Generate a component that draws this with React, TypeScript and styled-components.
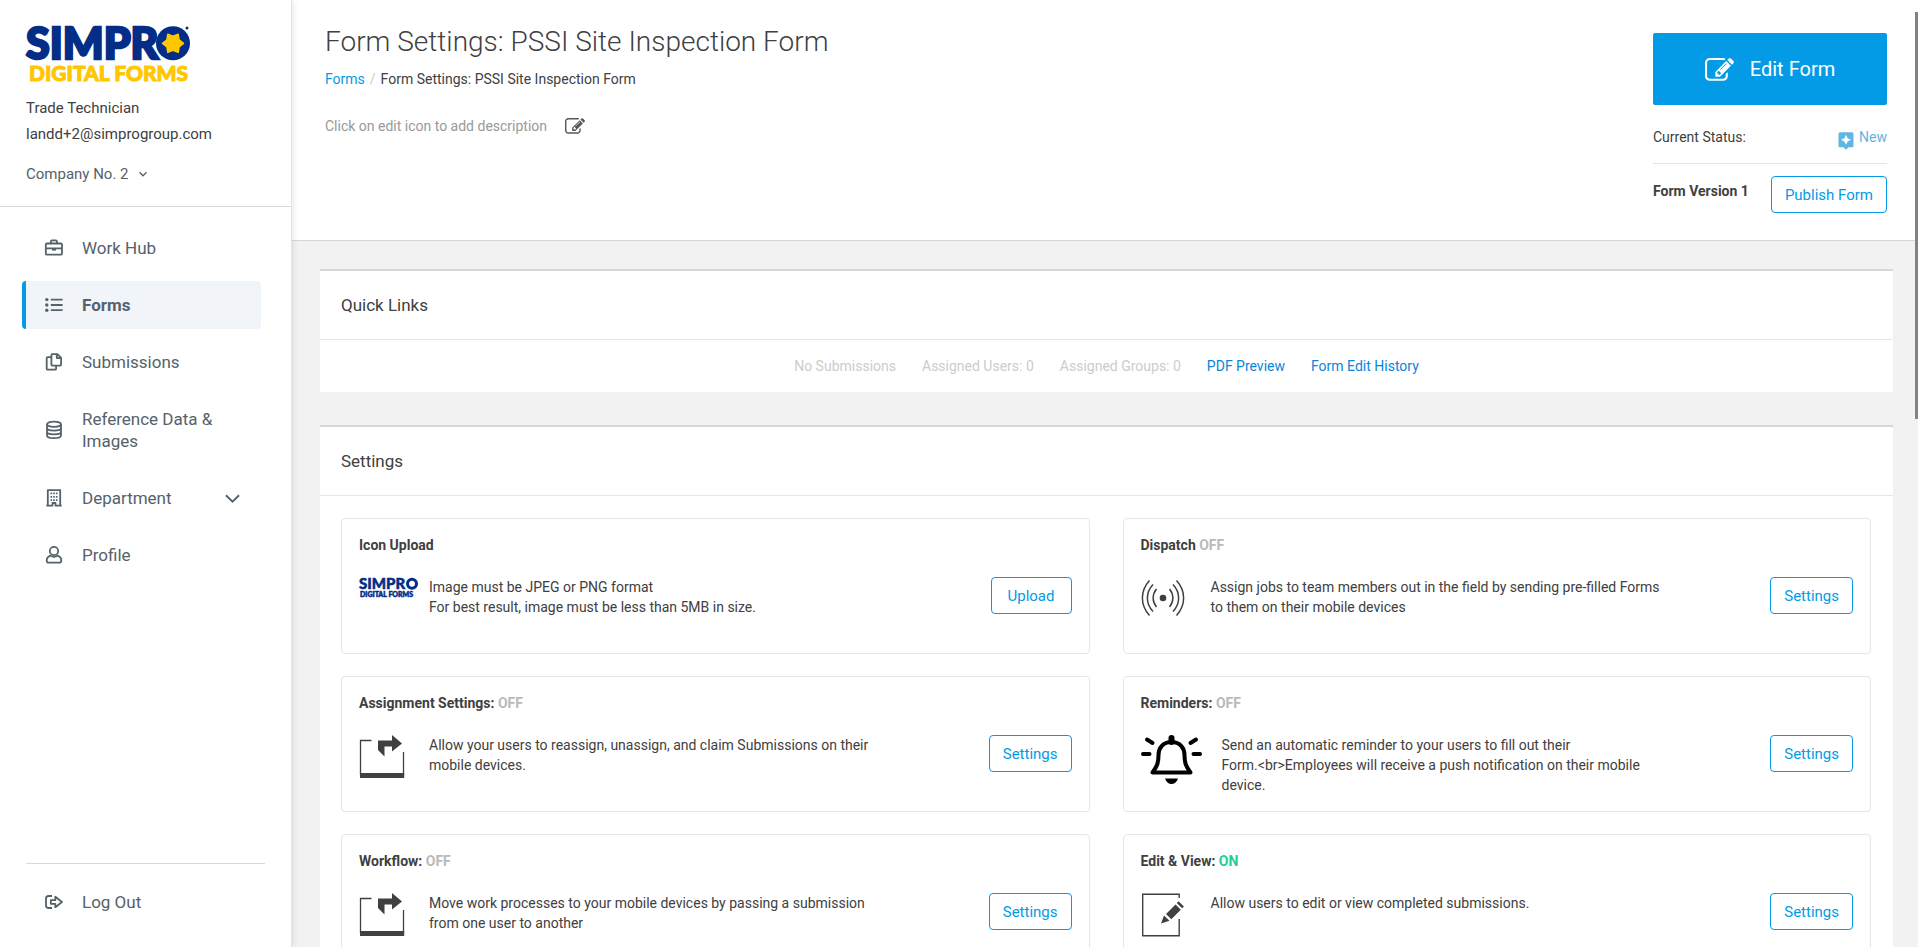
import React from "react";
import styled, { createGlobalStyle } from "styled-components";

const color = {
  text: "#404041",
  nav: "#55626a",
  accent: "#039be5",
  link: "#0a84dc",
  line: "#e4e7e9",
  edge: "#d2d9dd",
  muted: "#999999",
  off: "#b8babb",
  on: "#1fce95",
  navy: "#032d86",
  gold: "#ffc700",
};

const Global = createGlobalStyle`
  *, *::before, *::after { box-sizing: border-box; }
  body {
    margin: 0;
    font-family: Roboto, "Liberation Sans", sans-serif;
    font-size: 14px;
    line-height: 20px;
    color: ${color.text};
    background: #f2f2f2;
  }
  h1, h2, h3, p, ul { margin: 0; padding: 0; font-weight: 400; }
  ul { list-style: none; }
  a { text-decoration: none; color: inherit; }
  button { font-family: inherit; cursor: pointer; }
  svg { display: block; flex: none; overflow: visible; }
`;

const Shell = styled.div`
  display: flex;
  height: 100vh;
`;

const Sidebar = styled.aside`
  display: flex;
  flex-direction: column;
  flex: none;
  width: 292px;
  background: #fff;
  border-right: 1px solid #e3e3e3;
  box-shadow: 1px 0 6px rgba(0, 0, 0, 0.1);
  z-index: 1;
`;

const Account = styled.div`
  padding: 24px 26px 19px;
  border-bottom: 1px solid #d8d8d8;
  font-size: 15px;
  line-height: 26px;
`;

const AccountDetails = styled.div`
  padding-top: 11px;
`;

const CompanyButton = styled.button`
  display: flex;
  align-items: center;
  gap: 10px;
  margin-top: 14px;
  padding: 0;
  border: 0;
  background: none;
  font-size: 15px;
  line-height: 26px;
  color: ${color.nav};
`;

const Nav = styled.nav`
  flex: 1;
  padding: 17px 30px 0 22px;
`;

const NavList = styled.ul`
  display: flex;
  flex-direction: column;
  gap: 9px;
`;

const NavLink = styled.a<{ $active?: boolean }>`
  display: flex;
  align-items: center;
  gap: 18px;
  padding: 13px 21px 13px 18px;
  border-left: 4px solid ${(p) => (p.$active ? color.accent : "transparent")};
  border-radius: 4px;
  background: ${(p) => (p.$active ? "#f1f5fa" : "none")};
  font-size: 17px;
  font-weight: ${(p) => (p.$active ? 700 : 400)};
  line-height: 22px;
  color: ${color.nav};
`;

const NavLabel = styled.span`
  flex: 1;
`;

const SidebarFoot = styled.div`
  margin: 0 26px;
  padding: 14px 0 21px;
  border-top: 1px solid #d8d8d8;
  a { margin-left: -4px; }
`;

const Main = styled.main`
  flex: 1;
  min-width: 0;
  overflow-y: auto;
  scrollbar-width: none;
`;

const ScrollThumb = styled.div`
  position: fixed;
  top: 12px;
  right: 0;
  width: 3px;
  height: 43%;
  background: #808486;
  z-index: 2;
`;

const PageHeader = styled.header`
  display: flex;
  justify-content: space-between;
  padding: 24px 31px 27px 33px;
  background: #fff;
  border-bottom: 1px solid ${color.edge};
`;

const PageTitle = styled.h1`
  font-size: 28px;
  font-weight: 300;
  line-height: 36px;
`;

const Breadcrumb = styled.nav`
  display: flex;
  gap: 5px;
  margin-top: 9px;
  a { color: ${color.accent}; }
  i { color: #ccc; font-style: normal; }
`;

const Description = styled.div`
  display: flex;
  align-items: center;
  gap: 18px;
  margin-top: 27px;
  color: ${color.muted};
`;

const IconButton = styled.button`
  padding: 0;
  border: 0;
  background: none;
  color: #58585a;
`;

const Actions = styled.div`
  flex: none;
  width: 234px;
  padding-top: 9px;
`;

const EditButton = styled.button`
  display: flex;
  align-items: center;
  justify-content: center;
  gap: 16px;
  width: 100%;
  height: 72px;
  border: 0;
  border-radius: 2px;
  background: ${color.accent};
  color: #fff;
  font-size: 20px;
`;

const StatusRow = styled.div`
  display: flex;
  justify-content: space-between;
  padding: 22px 0 16px;
  border-bottom: 1px solid ${color.line};
`;

const StatusValue = styled.span`
  display: flex;
  align-items: center;
  gap: 3px;
  color: #62b5e2;
`;

const VersionRow = styled.div`
  display: flex;
  justify-content: space-between;
  padding-top: 12px;
  strong { padding-top: 5px; }
`;

const OutlineButton = styled.button`
  flex: none;
  min-width: 81px;
  height: 37px;
  padding: 0 13px;
  border: 1px solid ${color.accent};
  border-radius: 4px;
  background: #fff;
  font-size: 15px;
  color: ${color.accent};
`;

const Content = styled.div`
  display: flex;
  flex-direction: column;
  gap: 33px;
  padding: 28px 25px 33px 28px;
`;

const Panel = styled.section`
  border-top: 2px solid ${color.edge};
  background: #fff;
`;

const PanelTitle = styled.h2`
  padding: 22px 21px;
  border-bottom: 1px solid ${color.line};
  font-size: 17px;
  line-height: 24px;
`;

const LinkRow = styled.div`
  display: flex;
  justify-content: center;
  gap: 26px;
  padding: 16px 22px;
  color: #ccc;
  a { color: ${color.link}; }
`;

const CardGrid = styled.div`
  display: grid;
  grid-template-columns: 1fr 1fr;
  gap: 22px 33px;
  padding: 22px 22px 22px 21px;
`;

const Card = styled.article`
  min-height: 136px;
  padding: 16px 17px;
  border: 1px solid ${color.line};
  border-radius: 4px;
`;

const CardTitle = styled.h3`
  font-size: 14px;
  font-weight: 700;
  line-height: 20px;
`;

const CardState = styled.span<{ $on: boolean }>`
  color: ${(p) => (p.$on ? color.on : color.off)};
`;

const CardBody = styled.div`
  display: flex;
  align-items: flex-start;
  margin-top: 22px;
`;

const CardIcon = styled.div<{ $wide?: boolean }>`
  flex: none;
  width: ${(p) => (p.$wide ? 81 : 70)}px;
`;

const CardText = styled.p`
  flex: 1;
  white-space: pre-line;
`;

const NavGlyph = ({ children }: { children: React.ReactNode }) => (
  <svg width="20" height="20" viewBox="0 0 20 20" fill="none" stroke="currentColor" strokeWidth="1.8" strokeLinejoin="round" aria-hidden="true">
    {children}
  </svg>
);

const Briefcase = () => (
  <NavGlyph>
    <rect x="1.8" y="5.5" width="16.2" height="11.2" rx="1.2" />
    <path d="M6.900 5.200V3.400q0-1 1-1h4q1 0 1 1v1.800M2 10.400h15.800" />
    <rect x="8" y="10.200" width="4" height="2.400" fill="currentColor" stroke="none" />
  </NavGlyph>
);

const List = () => (
  <NavGlyph>
    <path d="M6.800 4.600h11.800M6.800 10h11.800M6.800 15.200h11.800" />
    <g fill="currentColor" stroke="none">
      <circle cx="2.800" cy="4.600" r="1.700" />
      <circle cx="2.800" cy="10" r="1.700" />
      <circle cx="2.800" cy="15.200" r="1.700" />
    </g>
  </NavGlyph>
);

const Copy = () => (
  <NavGlyph>
    <path d="M8.400 2.200h5l3.700 3.700v6.700q0 1-1 1H8.400q-1 0-1-1V3.200q0-1 1-1zM12.800 2.400v3.700h4" />
    <path d="M7.200 5.100H3.700q-1 0-1 1v10.600q0 1 1 1h7.400q1 0 1-1v-2.900" />
  </NavGlyph>
);

const Database = () => (
  <NavGlyph>
    <ellipse cx="10" cy="4.300" rx="7" ry="2.600" />
    <path d="M3 4.300v11.200c0 1.500 3 2.700 7 2.700s7-1.200 7-2.700V4.300M3 8c0 1.500 3 2.600 7 2.600s7-1.100 7-2.600M3 11.800c0 1.500 3 2.600 7 2.600s7-1.100 7-2.600" />
  </NavGlyph>
);

const Building = () => (
  <NavGlyph>
    <path d="M3.800 17.500V2.200h12.400v15.300M2.300 17.700h6.200v-2.700h3v2.700h6.200" />
    <path d="M7.300 4.500v9M10 4.500v9M12.700 4.500v9" strokeDasharray="1.800 1.600" strokeWidth="1.600" />
  </NavGlyph>
);

const Person = () => (
  <NavGlyph>
    <circle cx="10" cy="6" r="4.200" />
    <path d="M6.300 10.600c-2.200.8-3.600 2.500-3.600 4.800 0 1.500.6 2.200 2 2.200h10.600c1.400 0 2-.7 2-2.200 0-2.300-1.400-4-3.600-4.800-2 1.600-5.400 1.600-7.400 0z" />
  </NavGlyph>
);

const Exit = () => (
  <NavGlyph>
    <path d="M8 4H4.500Q2 4 2 6.500v7Q2 16 4.500 16H8" />
    <path d="M6.800 8.200v3.600h4.500v3.400L18 10l-6.700-5.200v3.400z" />
  </NavGlyph>
);

const Chevron = ({ width }: { width: number }) => (
  <svg width={width} height={width} viewBox="0 0 16 16" fill="none" stroke="currentColor" strokeWidth={width < 10 ? 2.600 : 2} aria-hidden="true">
    <path d="M1 4.500l7 7 7-7" />
  </svg>
);

const EditGlyph = ({ width }: { width: number }) => (
  <svg width={width} height={Math.round(width * 0.79)} viewBox="0 132 1792 1412" fill="currentColor" aria-hidden="true">
    <path d="M888 1184l116-116-152-152-116 116v56h96v96h56zm440-720q-16-16-33 1l-350 350q-17 17-1 33t33-1l350-350q17-17 1-33zm80 594v190q0 119-84.500 203.500t-203.500 84.500h-832q-119 0-203.500-84.500t-84.500-203.500v-832q0-119 84.500-203.500t203.500-84.500h832q63 0 117 25 15 7 18 23 3 17-9 29l-49 49q-14 14-32 8-23-6-45-6h-832q-66 0-113 47t-47 113v832q0 66 47 113t113 47h832q66 0 113-47t47-113v-126q0-13 9-22l64-64q15-15 35-7t20 29zm-96-738l288 288-672 672h-288v-288zm444 132l-92 92-288-288 92-92q28-28 68-28t68 28l152 152q28 28 28 68t-28 68z" />
  </svg>
);

const NewGlyph = () => (
  <svg width="20" height="24" viewBox="0 -2 24 24" fill="currentColor" aria-hidden="true">
    <path d="M19 2H5c-1.100 0-2 .9-2 2v14c0 1.100.9 2 2 2h4l3 3 3-3h4c1.100 0 2-.9 2-2V4c0-1.100-.9-2-2-2zm-5.120 10.880L12 17l-1.880-4.120L6 11l4.120-1.880L12 5l1.880 4.120L18 11l-4.120 1.880z" />
  </svg>
);

const StatusIcon = styled.span`
  height: 20px;
`;

const Logo = () => (
  <svg width="166" height="60" viewBox="0 0 166 60" role="img" aria-label="Simpro Digital Forms">
    <g fontFamily="Lato, sans-serif" fontWeight="900">
      <text x="0" y="35" fontSize="43" fill={color.navy} stroke={color.navy} strokeWidth="2.500">SIMPR</text>
      <text x="3" y="57" fontSize="21" fill={color.gold} stroke={color.gold} strokeWidth="1">DIGITAL FORMS</text>
    </g>
    <circle cx="147" cy="19.300" r="17" fill={color.navy} />
    <circle cx="161" cy="4" r="1.500" fill={color.navy} />
    <path
      transform="translate(147 19.300)"
      d="M10.500 0L6.100 3.500 5.200 9.100 0 7-5.200 9.100-6.100 3.500-10.500 0-6.100-3.500-5.200-9.100 0-7 5.200-9.100 6.100-3.500z"
      fill={color.gold}
      stroke={color.gold}
      strokeWidth="1.500"
      strokeLinejoin="round"
    />
  </svg>
);

const SmallLogo = () => (
  <svg width="60" height="22" viewBox="0 0 60 22" role="img" aria-label="Simpro Digital Forms">
    <g fontFamily="Lato, sans-serif" fontWeight="900" fill={color.navy} stroke={color.navy} strokeWidth="0.500">
      <text x="0" y="12" fontSize="15">SIMPR</text>
      <text x="1" y="20" fontSize="7">DIGITAL FORMS</text>
    </g>
    <circle cx="53" cy="6.700" r="4.500" fill="none" stroke={color.navy} strokeWidth="3" />
  </svg>
);

const ShareIcon = () => (
  <svg width="46" height="44" viewBox="0 0 46 44" fill="none" aria-hidden="true">
    <path d="M12.500 5.500H1.500V40M44.500 17v23" stroke={color.text} strokeWidth="1.300" />
    <path d="M1 38h44.200v5H1zM19 5.500h14V0l10 8.500-10 8V11.500h-7.500v10L19 15z" fill={color.text} />
  </svg>
);

const SignalIcon = () => (
  <svg width="44" height="44" viewBox="0 0 44 44" fill="none" stroke={color.text} strokeWidth="1.500" aria-hidden="true">
    <circle cx="22" cy="21" r="3.300" fill={color.text} stroke="none" />
    <path d="M8.500 3.500C-1 14-1 28 8.500 38.500M12 7.500c-7.500 8-7.500 19 0 27M15.500 12c-4.500 5.500-4.500 12.500 0 18" />
    <path d="M35.500 3.500C45 14 45 28 35.500 38.500M32 7.500c7.500 8 7.500 19 0 27M28.500 12c4.500 5.500 4.500 12.500 0 18" />
  </svg>
);

const BellIcon = () => (
  <svg width="61" height="50" viewBox="0 0 61 50" fill="none" stroke="#000" strokeWidth="4" strokeLinecap="round" strokeLinejoin="round" aria-hidden="true">
    <path d="M30.500 7C22 7 17.500 13 17.500 20c0 8-1.500 11.500-6 17.500h38c-4.500-6-6-9.500-6-17.500 0-7-4.500-13-13-13z" />
    <path d="M30.500 3V7" strokeWidth="6" />
    <path d="M6 4.500l5.500 3.500M2 19h6.500M55 4.500L49.500 8M59 19h-6.500" />
    <path d="M24 43.500h13c-1 3.500-3.500 5.500-6.500 5.500s-5.500-2-6.500-5.500z" fill="#000" stroke="none" />
  </svg>
);

const NoteIcon = () => (
  <svg width="44" height="44" viewBox="0 0 44 44" fill="none" aria-hidden="true">
    <path d="M38.200 5V1.200H1.700v41.600h36.500V26" stroke={color.text} strokeWidth="1.400" />
    <path d="M20 30.500l3-8 5.500 5.300zM25 21l9.500-9.500 5.300 5.300-9.500 9.500zM35.800 10l1.800-1.800 5.300 5.300-1.800 1.800z" fill={color.text} />
  </svg>
);

const navItems = [
  { label: "Work Hub", icon: <Briefcase /> },
  { label: "Forms", icon: <List />, active: true },
  { label: "Submissions", icon: <Copy /> },
  { label: "Reference Data & Images", icon: <Database /> },
  { label: "Department", icon: <Building />, expandable: true },
  { label: "Profile", icon: <Person /> },
];

const cards = [
  { title: "Icon Upload", state: "", icon: <SmallLogo />, text: "Image must be JPEG or PNG format\nFor best result, image must be less than 5MB in size.", action: "Upload" },
  { title: "Dispatch", state: "OFF", icon: <SignalIcon />, text: "Assign jobs to team members out in the field by sending pre-filled Forms\nto them on their mobile devices", action: "Settings" },
  { title: "Assignment Settings:", state: "OFF", icon: <ShareIcon />, text: "Allow your users to reassign, unassign, and claim Submissions on their\nmobile devices.", action: "Settings" },
  { title: "Reminders:", state: "OFF", icon: <BellIcon />, wide: true, text: "Send an automatic reminder to your users to fill out their\nForm.<br>Employees will receive a push notification on their mobile\ndevice.", action: "Settings" },
  { title: "Workflow:", state: "OFF", icon: <ShareIcon />, text: "Move work processes to your mobile devices by passing a submission\nfrom one user to another", action: "Settings" },
  { title: "Edit & View:", state: "ON", icon: <NoteIcon />, text: "Allow users to edit or view completed submissions.", action: "Settings" },
];

export default function App() {
  return (
    <Shell>
      <Global />
      <Sidebar>
        <Account>
          <Logo />
          <AccountDetails>
            <div>Trade Technician</div>
            <div>landd+2@simprogroup.com</div>
            <CompanyButton type="button">
              Company No. 2
              <Chevron width={8} />
            </CompanyButton>
          </AccountDetails>
        </Account>
        <Nav aria-label="Main">
          <NavList>
            {navItems.map((item) => (
              <li key={item.label}>
                <NavLink href="#" $active={item.active}>
                  {item.icon}
                  <NavLabel>{item.label}</NavLabel>
                  {item.expandable && <Chevron width={15} />}
                </NavLink>
              </li>
            ))}
          </NavList>
        </Nav>
        <SidebarFoot>
          <NavLink href="#">
            <Exit />
            <NavLabel>Log Out</NavLabel>
          </NavLink>
        </SidebarFoot>
      </Sidebar>
      <Main>
        <PageHeader>
          <div>
            <PageTitle>Form Settings: PSSI Site Inspection Form</PageTitle>
            <Breadcrumb aria-label="Breadcrumb">
              <a href="#">Forms</a>
              <i>/</i>
              <span>Form Settings: PSSI Site Inspection Form</span>
            </Breadcrumb>
            <Description>
              Click on edit icon to add description
              <IconButton type="button" aria-label="Edit description">
                <EditGlyph width={20} />
              </IconButton>
            </Description>
          </div>
          <Actions>
            <EditButton type="button">
              <EditGlyph width={29} />
              Edit Form
            </EditButton>
            <StatusRow>
              <span>Current Status:</span>
              <StatusValue>
                <StatusIcon>
                  <NewGlyph />
                </StatusIcon>
                New
              </StatusValue>
            </StatusRow>
            <VersionRow>
              <strong>Form Version 1</strong>
              <OutlineButton type="button">Publish Form</OutlineButton>
            </VersionRow>
          </Actions>
        </PageHeader>
        <Content>
          <Panel>
            <PanelTitle>Quick Links</PanelTitle>
            <LinkRow>
              <span>No Submissions</span>
              <span>Assigned Users: 0</span>
              <span>Assigned Groups: 0</span>
              <a href="#">PDF Preview</a>
              <a href="#">Form Edit History</a>
            </LinkRow>
          </Panel>
          <Panel>
            <PanelTitle>Settings</PanelTitle>
            <CardGrid>
              {cards.map((card) => (
                <Card key={card.title}>
                  <CardTitle>
                    {card.title} {card.state && <CardState $on={card.state === "ON"}>{card.state}</CardState>}
                  </CardTitle>
                  <CardBody>
                    <CardIcon $wide={card.wide}>{card.icon}</CardIcon>
                    <CardText>{card.text}</CardText>
                    <OutlineButton type="button">{card.action}</OutlineButton>
                  </CardBody>
                </Card>
              ))}
            </CardGrid>
          </Panel>
        </Content>
      </Main>
      <ScrollThumb />
    </Shell>
  );
}
